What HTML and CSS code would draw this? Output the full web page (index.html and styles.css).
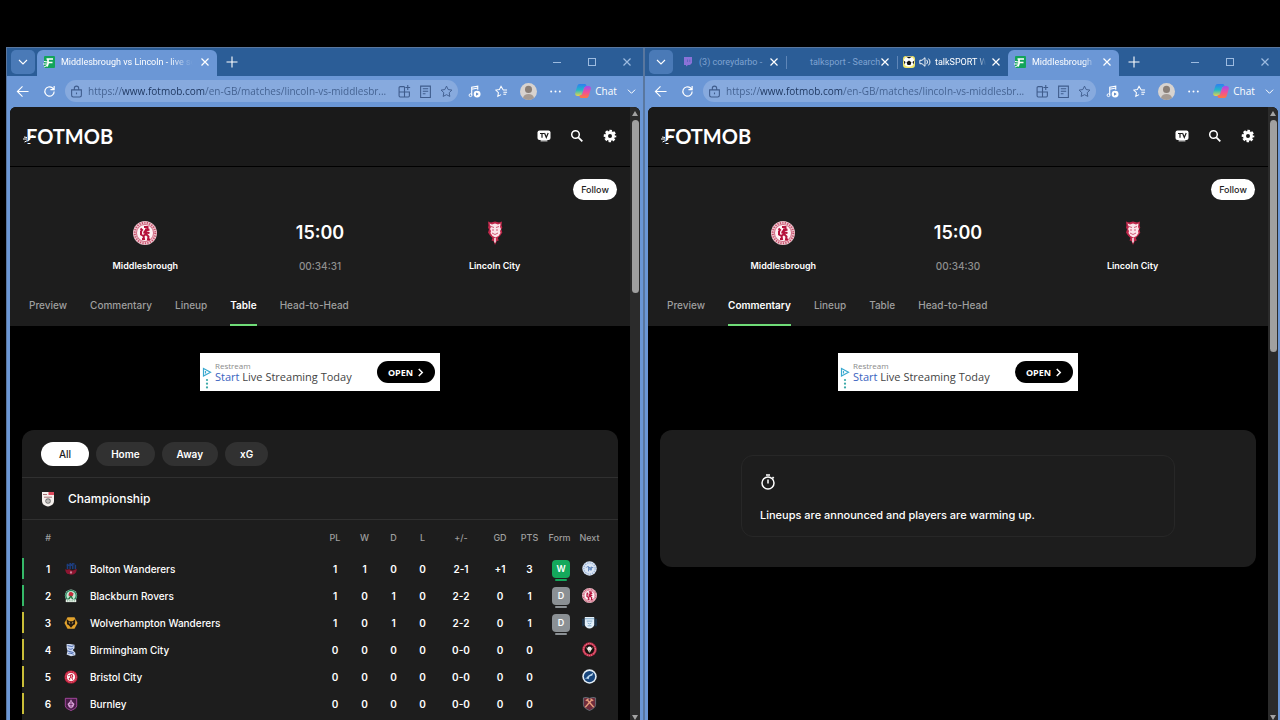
FILE: index.html
```html
<!DOCTYPE html>
<html lang="en">
<head>
    <meta charset="UTF-8">
    <meta name="viewport" content="width=device-width, initial-scale=1.0">
    <title>Middlesbrough vs Lincoln - live score</title>
    <link rel="stylesheet" href="styles.css">
</head>
<body>
    <!-- Shared icons -->
    <svg class="sprite" aria-hidden="true">
        <defs>
            <linearGradient id="cop1" x1="0" y1="0" x2="0" y2="1"><stop offset="0" stop-color="#2f7df0"/><stop offset=".5" stop-color="#22b8c8"/><stop offset="1" stop-color="#e8d34a"/></linearGradient>
            <linearGradient id="cop2" x1="0" y1="0" x2="0" y2="1"><stop offset="0" stop-color="#a04df0"/><stop offset=".5" stop-color="#ef4f9a"/><stop offset="1" stop-color="#ff7a3c"/></linearGradient>
        </defs>
        <symbol id="chevron" viewBox="0 0 10 10"><path d="M1 3l4 4 4-4" fill="none" stroke="currentColor" stroke-width="1.1"/></symbol>
        <symbol id="cross" viewBox="0 0 10 10"><path d="M1.500 1.500l7 7M8.500 1.500l-7 7" fill="none" stroke="currentColor" stroke-width="1.200"/></symbol>
        <symbol id="plus" viewBox="0 0 12 12"><path d="M6 .5v11M.5 6h11" fill="none" stroke="currentColor" stroke-width="1.100"/></symbol>
        <symbol id="minimise" viewBox="0 0 10 10"><path d="M1 5.500h8" stroke="currentColor"/></symbol>
        <symbol id="maximise" viewBox="0 0 10 10"><rect x="1.500" y="1.500" width="7" height="7" fill="none" stroke="currentColor"/></symbol>
        <symbol id="back" viewBox="0 0 14 14"><path d="M13.500 7H1.500M7 1.500L1.500 7 7 12.500" fill="none" stroke="currentColor" stroke-width="1.200"/></symbol>
        <symbol id="reload" viewBox="0 0 14 14"><path d="M12 7A5 5 0 1 1 10 3l1.800 1.800M12 1v4H8" fill="none" stroke="currentColor" stroke-width="1.300"/></symbol>
        <symbol id="lock" viewBox="0 0 12 12"><path d="M1.500 4.500h9v5a1.500 1.500 0 0 1-1.500 1.500H3a1.500 1.500 0 0 1-1.500-1.500zM4 4.500V3a2 2 0 0 1 4 0v1.500M6 7v1.500" fill="none" stroke="currentColor"/></symbol>
        <symbol id="apps" viewBox="0 0 12 12"><path d="M6 1.500H2a1 1 0 0 0-1 1v7.500a1 1 0 0 0 1 1h7.500a1 1 0 0 0 1-1V6.500H1M6 1.500V11M9 0v4.500M6.800 2.300h4.400" fill="none" stroke="currentColor"/></symbol>
        <symbol id="reader" viewBox="0 0 12 12"><path d="M1.500 1h9v10.500h-9zM3.500 3.500h5M3.500 5.700h5M3.500 8h2.500" fill="none" stroke="currentColor"/></symbol>
        <symbol id="star" viewBox="0 0 14 14"><path d="M7 1.200l1.800 3.700 4 .6-2.900 2.800.7 4L7 10.400l-3.600 1.900.7-4L1.200 5.500l4-.6z" fill="none" stroke="currentColor" stroke-linejoin="round"/></symbol>
        <symbol id="media" viewBox="0 0 14 14"><path d="M4 11V2.500l6.500-1.300v4M4 4.500l6.500-1.300" fill="none" stroke="currentColor" stroke-width="1.200"/><circle cx="2.700" cy="11" r="1.500" fill="none" stroke="currentColor"/><circle cx="9.800" cy="9.800" r="3.700" fill="currentColor"/><path d="M8.700 8l2.900 1.800-2.900 1.800z" fill="#5c87c6"/></symbol>
        <symbol id="favourites" viewBox="0 0 14 14"><path d="M8.700 5.200L6.500 1.400 4.800 4.900l-4 .6 2.900 2.800-.7 4 3.500-1.900M8.500 5.500H13M9 7.700h4M9 10h3" fill="none" stroke="currentColor" stroke-width="1.100"/></symbol>
        <symbol id="avatar" viewBox="0 0 16 16"><circle cx="8" cy="8" r="8" fill="#d8d3cf"/><circle cx="8" cy="6" r="3.300" fill="#897f78"/><path d="M2.800 14a5.300 4.500 0 0 1 10.400 0A8 8 0 0 1 2.800 14z" fill="#a59b94"/></symbol>
        <symbol id="dots" viewBox="0 0 12 12"><circle cx="2" cy="6" r=".9" fill="currentColor"/><circle cx="6" cy="6" r=".9" fill="currentColor"/><circle cx="10" cy="6" r=".9" fill="currentColor"/></symbol>
        <symbol id="copilot" viewBox="0 0 16 16"><path d="M4.500 1h5.300c1.400 0 1.500 1.200 1.800 2.500L9 4.300 6.800 11C6.300 12.500 5.300 13 4 13H2.300C.5 13-.2 11.500.3 9.700L2.300 3C2.700 1.700 3.500 1 4.500 1z" fill="url(#cop1)"/><path d="M11.500 15H6.200c-1.400 0-1.500-1.200-1.800-2.500L7 11.700 9.200 5c.5-1.500 1.500-2 2.800-2h1.700c1.800 0 2.500 1.500 2 3.300L13.700 13c-.4 1.300-1.200 2-2.200 2z" fill="url(#cop2)"/></symbol>
        <symbol id="favicon" viewBox="0 0 12 12"><rect x="1" width="11" height="12" rx="1" fill="#12a45a"/><path d="M3.500 3H10M5 3v4.500L4 10.500M5.500 6.500h4" fill="none" stroke="#fff" stroke-width="1.700"/><path d="M4.500 6L1 5.500M4 8H0M4 9.500L1 11" fill="none" stroke="#fff"/></symbol>
        <symbol id="twitch" viewBox="0 0 12 12"><path d="M3 1h8v6L9 9H7L5 10.500V9H3z" fill="#8a72d8"/><path d="M6.500 3.500v2.500M8.800 3.500v2.500" stroke="#5f68c0"/></symbol>
        <symbol id="ball" viewBox="0 0 12 12"><rect width="12" height="12" rx="3" fill="#f1e66a"/><circle cx="6" cy="5.500" r="5.300" fill="#fff"/><path d="M6 4.500l2.400 1.700-.9 2.800h-3l-.9-2.800zM3 .8h6L6 2.600zM.6 4.500L2.500 6 1.600 8.500zM11.400 4.500L9.500 6l.9 2.500z" fill="#111"/></symbol>
        <symbol id="speaker" viewBox="0 0 14 12"><path d="M1 4h2.500L7 1v10L3.500 8H1zM9 3.500a4 4 0 0 1 0 5M11 2a6 6 0 0 1 0 8" fill="none" stroke="currentColor" stroke-width="1.100"/></symbol>

        <symbol id="logo-mark" viewBox="0 0 14 14"><path d="M4 8.500L1 8M4 10H0M4.500 11.500L1.500 13" fill="none" stroke="#fff"/><path d="M3 14l5-4v4z" fill="#1a1a1a"/><circle cx="9.500" cy="7.500" r="1.600" fill="#fff"/></symbol>
        <symbol id="tv" viewBox="0 0 14 14"><rect x=".5" y="1.500" width="13" height="9.500" rx="2" fill="#fff"/><rect x="3.500" y="11" width="7" height="1.500" rx=".5" fill="#bbb"/><path d="M3 4.500h4M5 4.500v4.300M7.500 4l1.800 4.500L11.200 4" fill="none" stroke="#1a1a1a" stroke-width="1.200"/></symbol>
        <symbol id="search" viewBox="0 0 14 14"><circle cx="5.500" cy="5.500" r="3.800" fill="none" stroke="#fff" stroke-width="1.500"/><path d="M8.300 8.300l4 4" stroke="#fff" stroke-width="1.800"/></symbol>
        <symbol id="gear" viewBox="0 0 14 14"><circle cx="7" cy="7" r="3.500" fill="none" stroke="#fff" stroke-width="3"/><circle cx="7" cy="7" r="5.300" fill="none" stroke="#fff" stroke-width="2" stroke-dasharray="2.500 1.663" stroke-dashoffset="1.250"/></symbol>
        <symbol id="adchoice" viewBox="0 0 10 22"><path d="M1.500 1.500v7.500l7-3.700zM3.500 4v2.500" fill="none" stroke="#3aa9d0" stroke-width="1.200"/><circle cx="5" cy="13" r="1.100" fill="#3aa9a8"/><circle cx="5" cy="16.700" r="1.100" fill="#3aa9a8"/><circle cx="5" cy="20.400" r="1.100" fill="#3aa9a8"/></symbol>
        <symbol id="arrow" viewBox="0 0 8 10"><path d="M2 1l4 4-4 4" fill="none" stroke="#fff" stroke-width="1.700"/></symbol>
        <symbol id="stopwatch" viewBox="0 0 16 16"><circle cx="8" cy="9" r="6" fill="none" stroke="#fff" stroke-width="1.500"/><path d="M6 1h4M8 5.500V9.500M12.500 3l1.300 1.300" stroke="#fff" stroke-width="1.500"/></symbol>

        <!-- Club crests -->
        <symbol id="middlesbrough" viewBox="0 0 24 24"><circle cx="12" cy="12" r="12" fill="#eec6cf"/><circle cx="12" cy="12" r="10.300" fill="none" stroke="#c8506c" stroke-width="2" stroke-dasharray="1.200 1.300"/><circle cx="12" cy="12" r="8.500" fill="#fdf3f5" stroke="#c23a5b" stroke-width=".7"/><path d="M11 6h3.500v2.500M13 7.500v5.500l-2.500 2 .5 3H9M13 13l2.500 2.500L15 18.500h2M13 9.500l3.500-1M13 11.500l3.500.5M10.500 15L8 13.500V10.500L9 9 7.500 7.500M12 9.500l-1 3" fill="none" stroke="#b5123c" stroke-width="2"/></symbol>
        <symbol id="lincoln" viewBox="0 0 24 24"><path d="M5 .5l3 1 4-1 4 1 3-1-.5 4 .8 2-1 2 1 3-2 3-2.500 2.500 1 2.500-2 .5L12 24l-1.500-4-2-.5 1-2.500L7 14.500l-2-3 1-3-1-2 .5-2z" fill="#c0274a"/><path d="M6.500 2.500l2.500 1 3-1 3 1 2.500-1-.5 3.500 1 2-1 2 .5 2-2 3-3 1.500-3-1.500-2-3 .5-2-1-2 1-2z" fill="#fbe3e8"/><path d="M8 5.500l3 1M13 6.500l3-1M9 9h2M13 9h2M9 12l3 1.500 3-1.500" fill="none" stroke="#cf5a76"/><path d="M11.300 17h1.400v4.500h-1.400z" fill="#fff"/></symbol>
        <symbol id="efl" viewBox="0 0 16 16"><path d="M2 1h12v9c0 3-2.500 5-6 5.500C4.500 15 2 13 2 10z" fill="#f4efec"/><path d="M8.500 1H14v3h-5.500z" fill="#dd4a5c"/><path d="M3 3.500h4M4 6.200h8" stroke="#a87478"/><circle cx="8" cy="10" r="2.200" fill="none" stroke="#777" stroke-width="1.200"/><circle cx="8" cy="10" r=".8" fill="#777"/></symbol>
        <symbol id="bolton" viewBox="0 0 16 16"><path d="M4 2v6M7 1v7M10 1v7M13 3v5M3 4l9-2" fill="none" stroke="#1d3d7d" stroke-width="1.700"/><path d="M1.500 8c2 2 4-1 6.500 1s4.500-1 6.500-1c0 5-3 6.500-6.500 6.500S1.500 13 1.500 8z" fill="#8e1531"/><circle cx="8" cy="12" r="1.300" fill="#cf8296"/></symbol>
        <symbol id="blackburn" viewBox="0 0 16 16"><circle cx="8" cy="7.500" r="7" fill="#c4e6d2"/><circle cx="8" cy="7.500" r="6" fill="none" stroke="#24805a" stroke-width="1.500"/><path d="M8 3l3 2-1 3-2 1-3-2 1-3z" fill="#c42d3c"/><path d="M8 8l-3 4M8 8l2 4" stroke="#24703c" stroke-width="1.500"/><path d="M2 12h12v3H2z" fill="#e8f0e8"/><path d="M3.500 13.500h9" stroke="#54946c" stroke-dasharray="1 1"/></symbol>
        <symbol id="wolves" viewBox="0 0 16 16"><path d="M4 1.500h8L15.500 8 12 14.500H4L.5 8z" fill="#e2a22c"/><path d="M3 3.500L6 6h4l3-2.500-.5 6-2 1-2.500 3-2.500-3-2-1z" fill="#241a10"/><path d="M5.500 7.500l1.500.8M10.500 7.500L9 8.300" stroke="#f4d080"/></symbol>
        <symbol id="birmingham" viewBox="0 0 16 16"><path d="M3 1h4l5 1v4l-2 2 3 3v3L8 15l-5-2 1-4-1-4z" fill="#cdd9f0"/><path d="M4 3l5 1 2-1M5 6c2 2 4 1 5 0M4 9l7 2M5 12c2-1 4 0 6 1" fill="none" stroke="#3758a8"/></symbol>
        <symbol id="bristol" viewBox="0 0 16 16"><circle cx="8" cy="8" r="7.500" fill="#c81e3c"/><circle cx="8" cy="8" r="6" fill="none" stroke="#e8909e" stroke-dasharray="1 1"/><circle cx="8" cy="8" r="4.600" fill="#fff"/><path d="M7 11l-1-1 2-2-1-2 2-1 1 2-1 2 1 2M6 6l-1 1" fill="none" stroke="#c81e3c" stroke-width="1.200"/></symbol>
        <symbol id="burnley" viewBox="0 0 16 16"><path d="M1.500 1.500h13V10c0 3-4 4-6.500 5.500C5.500 14 1.500 13 1.500 10z" fill="#4a1c48" stroke="#b04aa8"/><path d="M8 2.500l1.500 3L12 8l-1.500 3.500L8 13l-2.500-1.500L4 8l2.500-2.500z" fill="#d9a4d8"/><path d="M8 5v7M6 8.500h4" stroke="#6b2c68"/></symbol>
        <symbol id="qpr" viewBox="0 0 16 16"><circle cx="8" cy="8" r="7.700" fill="#dbe6f4"/><circle cx="8" cy="8" r="6" fill="none" stroke="#9cb4d8" stroke-width="1.400" stroke-dasharray="1.500 1"/><path d="M4.500 7a2 2 0 1 1 2 3M7 6v5M7 7h2v3M10 6v4M10 7h2" fill="none" stroke="#5d82ba"/></symbol>
        <symbol id="preston" viewBox="0 0 16 16"><path d="M0 4h3v8H0zM13 4h3v8h-3z" fill="#1d3146"/><path d="M3 2h10v8c0 2.500-2.500 4-5 4.500C5.500 14 3 12.500 3 10z" fill="#e4f0fa"/><path d="M3 4h10M5 6.500h6M6 8.500l2 1 2-1M6 11.500h4" fill="none" stroke="#7aa5c8"/></symbol>
        <symbol id="sheffield" viewBox="0 0 16 16"><circle cx="8" cy="8" r="7.700" fill="#c22c48"/><circle cx="8" cy="8" r="6.300" fill="none" stroke="#eeb0ba" stroke-dasharray="1 1.300"/><circle cx="8" cy="8" r="5" fill="#15100f"/><path d="M5 6l3 5 3-5" fill="none" stroke="#e8e4c8"/><circle cx="8" cy="7" r="2.200" fill="#f1eded"/></symbol>
        <symbol id="millwall" viewBox="0 0 16 16"><circle cx="8" cy="8" r="7.700" fill="#e4eef6"/><circle cx="8" cy="8" r="6" fill="#17457c"/><path d="M3 11l4-4 5-3-1 3-3 1-1 3-2-1z" fill="#bdd8ee"/></symbol>
        <symbol id="westham" viewBox="0 0 16 16"><path d="M1.500 2l3-.5L8 2.500l3.500-1 3 .5v7c0 3-3 5-6.500 6.500C4.500 14 1.500 12 1.500 9z" fill="#6f2c3c" stroke="#78909c" stroke-width=".7"/><path d="M3.500 12l7-8M12.500 12l-7-8M4 5l3-2M12 5L9 3" stroke="#e8a07c" stroke-width="1.400"/></symbol>
    </svg>

    <main class="desktop">
        <!-- Left browser window -->
        <section class="window">
            <div class="titlebar">
                <button class="tab-menu" aria-label="Tab actions"><svg><use href="#chevron"/></svg></button>
                <div class="tab tab-wide active">
                    <svg class="tab-icon"><use href="#favicon"/></svg>
                    <span class="tab-title">Middlesbrough vs Lincoln - live sc</span>
                    <button class="tab-close" aria-label="Close tab"><svg><use href="#cross"/></svg></button>
                </div>
                <button class="new-tab" aria-label="New tab"><svg><use href="#plus"/></svg></button>
                <div class="window-controls">
                    <button aria-label="Minimise"><svg><use href="#minimise"/></svg></button>
                    <button aria-label="Maximise"><svg><use href="#maximise"/></svg></button>
                    <button aria-label="Close"><svg><use href="#cross"/></svg></button>
                </div>
            </div>
            <div class="toolbar">
                <button aria-label="Back"><svg><use href="#back"/></svg></button>
                <button aria-label="Reload"><svg><use href="#reload"/></svg></button>
                <div class="omnibox">
                    <svg><use href="#lock"/></svg>
                    <input type="text" aria-label="Address" value="https://www.fotmob.com/en-GB/matches/lincoln-vs-middlesbr...">
                    <svg><use href="#apps"/></svg>
                    <svg><use href="#reader"/></svg>
                    <svg><use href="#star"/></svg>
                </div>
                <button aria-label="Media"><svg><use href="#media"/></svg></button>
                <button aria-label="Favourites"><svg><use href="#favourites"/></svg></button>
                <button class="avatar" aria-label="Profile"><svg><use href="#avatar"/></svg></button>
                <button aria-label="More"><svg><use href="#dots"/></svg></button>
                <button class="chat"><svg><use href="#copilot"/></svg>Chat</button>
                <button class="chat-more" aria-label="Chat options"><svg><use href="#chevron"/></svg></button>
            </div>
            <div class="viewport">
                <div class="page">
                    <header class="site-header">
                        <a class="logo" href="#"><svg><use href="#logo-mark"/></svg>FOTMOB</a>
                        <nav class="site-actions">
                            <button aria-label="TV schedule"><svg><use href="#tv"/></svg></button>
                            <button aria-label="Search"><svg><use href="#search"/></svg></button>
                            <button aria-label="Settings"><svg><use href="#gear"/></svg></button>
                        </nav>
                    </header>
                    <section class="match">
                        <button class="follow">Follow</button>
                        <div class="teams">
                            <div class="team"><svg><use href="#middlesbrough"/></svg><span>Middlesbrough</span></div>
                            <div class="team"><strong>15:00</strong><span class="countdown">00:34:31</span></div>
                            <div class="team"><svg><use href="#lincoln"/></svg><span>Lincoln City</span></div>
                        </div>
                        <nav class="match-tabs">
                            <a href="#">Preview</a>
                            <a href="#">Commentary</a>
                            <a href="#">Lineup</a>
                            <a href="#" class="current">Table</a>
                            <a href="#">Head-to-Head</a>
                        </nav>
                    </section>
                    <aside class="ad">
                        <svg class="ad-choice"><use href="#adchoice"/></svg>
                        <div class="ad-text">
                            <small>Restream</small>
                            <p><b>Start</b> Live Streaming Today</p>
                        </div>
                        <button class="ad-open">OPEN <svg><use href="#arrow"/></svg></button>
                    </aside>
                    <section class="card">
                        <div class="filters">
                            <button class="selected">All</button>
                            <button>Home</button>
                            <button>Away</button>
                            <button>xG</button>
                        </div>
                        <h2 class="league"><svg><use href="#efl"/></svg>Championship</h2>
                        <div class="table-wrap">
                            <table>
                                <colgroup>
                                    <col class="c-rank"><col><col class="c-pl"><col class="c-num"><col class="c-num"><col class="c-num"><col class="c-goals"><col class="c-pl"><col class="c-num"><col class="c-form"><col class="c-num">
                                </colgroup>
                                <thead>
                                    <tr><th>#</th><th></th><th>PL</th><th>W</th><th>D</th><th>L</th><th>+/-</th><th>GD</th><th>PTS</th><th>Form</th><th>Next</th></tr>
                                </thead>
                                <tbody>
                                    <tr class="promoted"><td>1</td><td><a class="club" href="#"><svg><use href="#bolton"/></svg>Bolton Wanderers</a></td><td>1</td><td>1</td><td>0</td><td>0</td><td>2-1</td><td>+1</td><td>3</td><td><span class="form win">W</span></td><td><svg class="next"><use href="#qpr"/></svg></td></tr>
                                    <tr class="promoted"><td>2</td><td><a class="club" href="#"><svg><use href="#blackburn"/></svg>Blackburn Rovers</a></td><td>1</td><td>0</td><td>1</td><td>0</td><td>2-2</td><td>0</td><td>1</td><td><span class="form">D</span></td><td><svg class="next"><use href="#middlesbrough"/></svg></td></tr>
                                    <tr class="playoff"><td>3</td><td><a class="club" href="#"><svg><use href="#wolves"/></svg>Wolverhampton Wanderers</a></td><td>1</td><td>0</td><td>1</td><td>0</td><td>2-2</td><td>0</td><td>1</td><td><span class="form">D</span></td><td><svg class="next"><use href="#preston"/></svg></td></tr>
                                    <tr class="playoff"><td>4</td><td><a class="club" href="#"><svg><use href="#birmingham"/></svg>Birmingham City</a></td><td>0</td><td>0</td><td>0</td><td>0</td><td>0-0</td><td>0</td><td>0</td><td></td><td><svg class="next"><use href="#sheffield"/></svg></td></tr>
                                    <tr class="playoff"><td>5</td><td><a class="club" href="#"><svg><use href="#bristol"/></svg>Bristol City</a></td><td>0</td><td>0</td><td>0</td><td>0</td><td>0-0</td><td>0</td><td>0</td><td></td><td><svg class="next"><use href="#millwall"/></svg></td></tr>
                                    <tr class="playoff"><td>6</td><td><a class="club" href="#"><svg><use href="#burnley"/></svg>Burnley</a></td><td>0</td><td>0</td><td>0</td><td>0</td><td>0-0</td><td>0</td><td>0</td><td></td><td><svg class="next"><use href="#westham"/></svg></td></tr>
                                </tbody>
                            </table>
                        </div>
                    </section>
                </div>
                <div class="scrollbar"><i class="up"></i><div class="track"><div class="thumb" style="height: 29%"></div></div><i class="down"></i></div>
            </div>
        </section>

        <!-- Right browser window -->
        <section class="window">
            <div class="titlebar">
                <button class="tab-menu" aria-label="Tab actions"><svg><use href="#chevron"/></svg></button>
                <div class="tab">
                    <svg class="tab-icon"><use href="#twitch"/></svg>
                    <span class="tab-title">(3) coreydarbo -</span>
                    <button class="tab-close" aria-label="Close tab"><svg><use href="#cross"/></svg></button>
                </div>
                <div class="tab divided">
                    <span class="tab-icon"></span>
                    <span class="tab-title">talksport - Search</span>
                    <button class="tab-close" aria-label="Close tab"><svg><use href="#cross"/></svg></button>
                </div>
                <div class="tab divided playing">
                    <svg class="tab-icon"><use href="#ball"/></svg>
                    <svg class="tab-icon"><use href="#speaker"/></svg>
                    <span class="tab-title">talkSPORT W</span>
                    <button class="tab-close" aria-label="Close tab"><svg><use href="#cross"/></svg></button>
                </div>
                <div class="tab active">
                    <svg class="tab-icon"><use href="#favicon"/></svg>
                    <span class="tab-title">Middlesbrough v</span>
                    <button class="tab-close" aria-label="Close tab"><svg><use href="#cross"/></svg></button>
                </div>
                <button class="new-tab" aria-label="New tab"><svg><use href="#plus"/></svg></button>
                <div class="window-controls">
                    <button aria-label="Minimise"><svg><use href="#minimise"/></svg></button>
                    <button aria-label="Maximise"><svg><use href="#maximise"/></svg></button>
                    <button aria-label="Close"><svg><use href="#cross"/></svg></button>
                </div>
            </div>
            <div class="toolbar">
                <button aria-label="Back"><svg><use href="#back"/></svg></button>
                <button aria-label="Reload"><svg><use href="#reload"/></svg></button>
                <div class="omnibox">
                    <svg><use href="#lock"/></svg>
                    <input type="text" aria-label="Address" value="https://www.fotmob.com/en-GB/matches/lincoln-vs-middlesbr...">
                    <svg><use href="#apps"/></svg>
                    <svg><use href="#reader"/></svg>
                    <svg><use href="#star"/></svg>
                </div>
                <button aria-label="Media"><svg><use href="#media"/></svg></button>
                <button aria-label="Favourites"><svg><use href="#favourites"/></svg></button>
                <button class="avatar" aria-label="Profile"><svg><use href="#avatar"/></svg></button>
                <button aria-label="More"><svg><use href="#dots"/></svg></button>
                <button class="chat"><svg><use href="#copilot"/></svg>Chat</button>
                <button class="chat-more" aria-label="Chat options"><svg><use href="#chevron"/></svg></button>
            </div>
            <div class="viewport">
                <div class="page">
                    <header class="site-header">
                        <a class="logo" href="#"><svg><use href="#logo-mark"/></svg>FOTMOB</a>
                        <nav class="site-actions">
                            <button aria-label="TV schedule"><svg><use href="#tv"/></svg></button>
                            <button aria-label="Search"><svg><use href="#search"/></svg></button>
                            <button aria-label="Settings"><svg><use href="#gear"/></svg></button>
                        </nav>
                    </header>
                    <section class="match">
                        <button class="follow">Follow</button>
                        <div class="teams">
                            <div class="team"><svg><use href="#middlesbrough"/></svg><span>Middlesbrough</span></div>
                            <div class="team"><strong>15:00</strong><span class="countdown">00:34:30</span></div>
                            <div class="team"><svg><use href="#lincoln"/></svg><span>Lincoln City</span></div>
                        </div>
                        <nav class="match-tabs">
                            <a href="#">Preview</a>
                            <a href="#" class="current">Commentary</a>
                            <a href="#">Lineup</a>
                            <a href="#">Table</a>
                            <a href="#">Head-to-Head</a>
                        </nav>
                    </section>
                    <aside class="ad">
                        <svg class="ad-choice"><use href="#adchoice"/></svg>
                        <div class="ad-text">
                            <small>Restream</small>
                            <p><b>Start</b> Live Streaming Today</p>
                        </div>
                        <button class="ad-open">OPEN <svg><use href="#arrow"/></svg></button>
                    </aside>
                    <section class="card commentary">
                        <div class="event">
                            <svg><use href="#stopwatch"/></svg>
                            <p>Lineups are announced and players are warming up.</p>
                        </div>
                    </section>
                </div>
                <div class="scrollbar"><i class="up"></i><div class="track"><div class="thumb" style="height: 39%"></div></div><i class="down"></i></div>
            </div>
        </section>
    </main>
</body>
</html>
```

FILE: styles.css
```css
* {
    box-sizing: border-box;
}
body {
    margin: 0;
    height: 100vh;
    overflow: hidden;
    background-color: #000;
    color: #fff;
    font-family: Inter, "Liberation Sans", sans-serif;
    font-size: 11px;
}
button, input {
    font: inherit;
    color: inherit;
    background: none;
    border: 0;
    padding: 0;
}
button {
    display: flex;
    align-items: center;
    justify-content: center;
    flex-shrink: 0;
    cursor: pointer;
}
a {
    color: inherit;
    text-decoration: none;
}
svg {
    display: block;
    flex-shrink: 0;
}
h2, p {
    margin: 0;
}
.sprite {
    position: absolute;
    width: 0;
    height: 0;
}

/* Two windows side by side, the right one runs just past the screen edge */
.desktop {
    display: grid;
    grid-template-columns: 1fr 1fr;
    height: 100%;
    padding-top: 47px;
    margin: 0 -2px 0 6px;
}
.window {
    display: flex;
    flex-direction: column;
    min-width: 0;
    min-height: 0;
    background-color: #6b97d6;
    border: 1px solid #59779f;
    border-bottom: 0;
    font-family: "Open Sans", "Noto Sans", sans-serif;
}

/* Tab strip */
.titlebar {
    display: flex;
    height: 28px;
    padding: 2px 0 0 4px;
    background-color: #2b5d97;
    font-family: Roboto, "Open Sans", sans-serif;
    font-size: 9px;
}
.tab-menu {
    width: 24px;
    height: 24px;
    margin-right: 2px;
    border-radius: 5px;
    background-color: #4a7ab7;
}
.tab-menu svg, .tab-close svg, .window-controls svg, .chat-more svg {
    width: 10px;
    height: 10px;
}
.tab {
    display: flex;
    align-items: center;
    gap: 6px;
    flex: 0 1 111px;
    min-width: 0;
    padding: 0 6px 2px;
    color: #7fa3d2;
}
.tab-wide {
    flex-basis: 180px;
}
.tab.active {
    border-radius: 6px 6px 0 0;
    background-color: #6b97d6;
    color: #fff;
}
.tab.divided {
    background: linear-gradient(#5f86b8, #5f86b8) left 6px / 1px 13px no-repeat;
}
.tab.playing {
    gap: 4px;
    color: #fff;
}
.tab-icon {
    width: 12px;
    height: 12px;
    flex-shrink: 0;
}
.tab-title {
    flex: 1;
    min-width: 0;
    white-space: nowrap;
}
.active .tab-title, .playing .tab-title {
    mask-image: linear-gradient(to right, #000 82%, transparent);
}
.tab-close {
    width: 12px;
    color: #fff;
}
.new-tab {
    width: 29px;
    height: 24px;
}
.new-tab svg {
    width: 12px;
    height: 12px;
}
.window-controls {
    display: flex;
    gap: 10px;
    margin-left: auto;
    padding-right: 4px;
    height: 24px;
    color: #9dbbe0;
}
.window-controls button {
    width: 25px;
}

/* Address bar row */
.toolbar {
    display: flex;
    align-items: center;
    height: 31px;
    padding: 0 4px 1px 2px;
    font-size: 10px;
}
.toolbar button {
    width: 27px;
    height: 22px;
}
.toolbar svg {
    width: 13px;
    height: 13px;
}
.omnibox {
    display: flex;
    align-items: center;
    flex: 1;
    gap: 5px;
    height: 22px;
    margin: 0 3px 0 2px;
    padding: 0 5px;
    border-radius: 11px;
    background-color: #87aade;
    color: #3f5c8c;
}
.omnibox svg + svg {
    margin-left: 3px;
}
.omnibox input {
    flex: 1;
    min-width: 0;
    outline: 0;
    /* the host name is darker than the rest of the address */
    background: linear-gradient(to right, #42608f 34px, #1c355e 34px, #1c355e 117px, #42608f 117px);
    background-clip: text;
    -webkit-text-fill-color: transparent;
}
.toolbar .avatar svg {
    width: 17px;
    height: 17px;
}
.toolbar .chat {
    width: 54px;
    gap: 4px;
}
.toolbar .chat svg {
    width: 16px;
    height: 16px;
}
.toolbar .chat-more {
    width: 16px;
}
.toolbar .chat-more svg {
    width: 9px;
}

/* Web page */
.viewport {
    display: flex;
    flex: 1;
    min-height: 0;
    margin: 0 3px;
    overflow: hidden;
    border-radius: 6px 6px 0 0;
    background-color: #000;
}
.page {
    flex: 1;
    min-width: 0;
    overflow: hidden;
    font-family: Inter, "Liberation Sans", sans-serif;
}
.scrollbar {
    display: flex;
    flex-direction: column;
    align-items: center;
    width: 10px;
    padding: 4px 0 0;
    background-color: #2b2b2b;
}
.scrollbar i {
    border: 3px solid transparent;
}
.scrollbar .up {
    border-top: 0;
    border-bottom: 5px solid #a3a3a3;
}
.scrollbar .down {
    border-bottom: 0;
    border-top: 5px solid #a3a3a3;
}
.track {
    flex: 1;
    width: 7px;
    padding-top: 4px;
}
.thumb {
    border-radius: 4px;
    background-color: #a0a0a0;
}
.site-header {
    display: flex;
    align-items: center;
    justify-content: space-between;
    height: 60px;
    padding: 0 13px 1px;
    border-bottom: 1px solid #000;
    background-color: #1a1a1a;
}
.logo {
    position: relative;
    padding-left: 3px;
    font-family: Lato, sans-serif;
    font-size: 20px;
    font-weight: bold;
    line-height: 24px;
}
.logo svg {
    position: absolute;
    left: 0;
    top: 5px;
    width: 14px;
    height: 14px;
}
.site-actions {
    display: flex;
    gap: 19px;
}
.site-actions svg {
    width: 14px;
    height: 14px;
}
.match {
    display: flex;
    flex-direction: column;
    padding-top: 12px;
    background-color: #1d1d1d;
}
.follow {
    align-self: flex-end;
    width: 44px;
    height: 21px;
    margin-right: 13px;
    border-radius: 11px;
    background-color: #fff;
    color: #1d1d1d;
    font-size: 9px;
    font-weight: 500;
}
.teams {
    display: grid;
    grid-template-columns: repeat(3, 1fr);
    margin: 21px 48px 0;
}
.team {
    display: flex;
    flex-direction: column;
    align-items: center;
    gap: 14px;
    font-size: 9px;
    font-weight: 600;
    line-height: 14px;
}
.team svg {
    width: 24px;
    height: 24px;
}
.team strong {
    font-size: 18px;
    font-weight: 600;
    line-height: 24px;
}
.team .countdown {
    color: #8f8f8f;
    font-size: 10px;
    font-weight: 500;
}
.match-tabs {
    display: flex;
    gap: 23px;
    margin-top: 11px;
    padding-left: 19px;
    color: #9f9f9f;
    font-size: 10px;
    font-weight: 500;
    line-height: 42px;
}
.match-tabs .current {
    color: #fff;
    font-weight: 600;
    box-shadow: inset 0 -2px #6fdc78;
}

/* Banner */
.ad {
    display: flex;
    align-items: center;
    width: 240px;
    height: 38px;
    margin: 27px auto 39px;
    padding: 0 5px 0 2px;
    background-color: #fff;
    color: #444;
    font-family: "Open Sans", sans-serif;
}
.ad-choice {
    width: 10px;
    height: 22px;
    margin-top: 12px;
}
.ad-text {
    flex: 1;
    padding-left: 3px;
    font-size: 11px;
    line-height: 14px;
    white-space: nowrap;
}
.ad-text small {
    display: block;
    color: #8a8a8a;
    font-size: 8px;
    line-height: 9px;
}
.ad-text b {
    color: #3a63c0;
    font-weight: normal;
}
.ad-open {
    gap: 4px;
    width: 58px;
    height: 22px;
    border-radius: 11px;
    background-color: #000;
    color: #fff;
    font-size: 9px;
    font-weight: bold;
}
.ad-open svg {
    width: 7px;
    height: 9px;
}

/* League table */
.card {
    margin: 0 12px;
    border-radius: 12px;
    background-color: #1d1d1d;
}
.filters {
    display: flex;
    gap: 7px;
    padding: 12px 19px 11px;
}
.filters button {
    height: 24px;
    padding: 0 15px;
    border-radius: 12px;
    background-color: #313131;
    font-size: 10px;
    font-weight: 600;
}
.filters .selected {
    padding: 0 18px;
    background-color: #fff;
    color: #1d1d1d;
    font-weight: 500;
}
.league {
    display: flex;
    align-items: center;
    gap: 12px;
    height: 43px;
    padding-left: 18px;
    border: solid #303030;
    border-width: 1px 0;
    font-size: 12px;
    font-weight: 500;
}
.league svg {
    width: 16px;
    height: 16px;
}
.table-wrap {
    padding: 0 14px 24px 0;
}
table {
    width: 100%;
    table-layout: fixed;
    border-collapse: collapse;
    font-size: 10px;
    font-weight: 600;
    text-align: center;
}
.c-rank { width: 42px; }
.c-pl { width: 30px; }
.c-num { width: 29px; }
.c-goals { width: 48px; }
.c-form { width: 31px; }
th, td {
    height: 27px;
    padding: 0;
}
th {
    height: 35px;
    color: #9f9f9f;
    font-size: 9px;
    font-weight: 500;
}
th:first-child, td:first-child {
    padding-left: 10px;
}
.promoted td:first-child {
    background: linear-gradient(#35b868, #35b868) left center / 2px 21px no-repeat;
}
.playoff td:first-child {
    background: linear-gradient(#c9bd38, #c9bd38) left center / 2px 21px no-repeat;
}
.club {
    display: flex;
    align-items: center;
    gap: 12px;
    font-size: 10px;
    font-weight: 500;
}
.club svg {
    width: 14px;
    height: 14px;
}
.next {
    width: 15px;
    height: 15px;
    margin: 0 auto;
}
.form {
    position: relative;
    display: block;
    width: 18px;
    height: 18px;
    margin: 0 auto 0 8px;
    border-radius: 4px;
    background-color: #8b9094;
    font-size: 9px;
    line-height: 18px;
}
.form::after {
    content: "";
    position: absolute;
    left: 3px;
    right: 3px;
    bottom: -3px;
    height: 2px;
    border-radius: 1px;
    background-color: #8b9094;
}
.form.win, .form.win::after {
    background-color: #14a85c;
}

/* Commentary */
.commentary {
    padding: 25px 81px 30px;
}
.event {
    padding: 18px 18px 14px;
    border: 1px solid #272727;
    border-radius: 12px;
    font-size: 11px;
    font-weight: 500;
    line-height: 14px;
}
.event svg {
    width: 16px;
    height: 16px;
    margin-bottom: 18px;
}
```
